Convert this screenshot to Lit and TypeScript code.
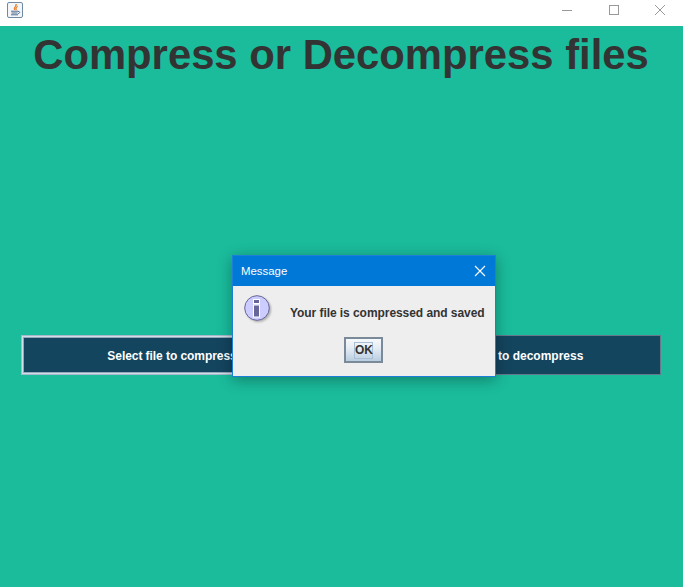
import { LitElement, html, css } from "lit";
import { customElement } from "lit/decorators.js";

@customElement("app-root")
export class AppRoot extends LitElement {
  static styles = css`
    :host { display: block; position: relative; width: 683px; height: 587px; overflow: hidden; background: #1abc9c; font-family: "Liberation Sans", Arial, sans-serif; }
    .titlebar { height: 26px; background: #fff; display: flex; align-items: flex-start; justify-content: space-between; }
    .appicon { margin: 2px 0 0 7px; width: 16px; height: 16px; display: block; }
    .winctl { display: flex; }
    .winctl svg { display: block; width: 46px; height: 20px; }
    .main { display: flex; flex-direction: column; }
    h1 { margin: 5px 0 0; height: 48px; text-align: center; font-size: 41.8px; line-height: 48px; font-weight: 700; color: #333333; padding-right: 1px; }
    .row { display: flex; justify-content: space-between; padding: 0 22px; margin-top: 256px; }
    .btn { box-sizing: border-box; height: 40px; background: #14455f; color: #fff; font-size: 12px; font-weight: 700; display: flex; align-items: center; justify-content: center; padding-top: 1px; }
    .b1 { width: 304px; margin-left: -1px; border: 1px solid #a3b8cc; box-shadow: inset 0 0 0 1px #d3dde7, inset 0 0 0 2px #93a8bc; letter-spacing: -0.06px; padding-right: 2px; }
    .b2 { width: 300px; border: 1px solid #65788e; }
    .dialog { position: absolute; left: 232px; top: 255px; width: 264px; height: 122px; box-sizing: border-box; background: #eeeeee; border: 1px solid #1e7fd8; box-shadow: 0 3px 14px rgba(0,0,0,.32); display: flex; flex-direction: column; }
    .dtitle { height: 30px; flex: none; background: #0078d7; color: #fff; font-size: 11.4px; display: flex; align-items: center; justify-content: space-between; padding: 0 9px 0 8px; }
    .dtitle svg { display: block; width: 12px; height: 12px; }
    .dbody { display: flex; align-items: flex-start; padding: 8px 0 0 10px; }
    .info { width: 30px; height: 30px; display: block; flex: none; }
    .msg { margin: 12px 0 0 17px; font-size: 12px; letter-spacing: -0.06px; font-weight: 700; line-height: 14px; color: #333; white-space: nowrap; }
    .actions { display: flex; justify-content: center; margin-top: 13px; padding-right: 1px; }
    .ok { box-sizing: border-box; width: 39px; height: 26px; border: 2px solid #7a8a99; background: linear-gradient(#f6f9fc, #e6edf4 40%, #b9cde0); display: flex; align-items: center; justify-content: center; padding: 0; font: 700 12px "Liberation Sans", Arial, sans-serif; color: #333; }
    .ok span { display: block; box-sizing: border-box; border: 1px solid #a8bfd6; width: 19px; height: 17px; line-height: 15px; text-align: center; }
  `;

  render() {
    return html`
      <div class="titlebar">
        <svg class="appicon" viewBox="0 0 16 16">
          <rect x=".5" y=".5" width="15" height="15" rx="1.5" fill="#f3f6f9" stroke="#6f8aa3"/>
          <path d="M9 2C10.6 4 6.6 5 7.8 8 6 6.2 9 4.6 9 2zM10.6 4.2C9.8 5.4 8.6 6 9.2 8 8.2 6.4 9 5 10.6 4.2z" fill="#e8791e" stroke="#e8791e" stroke-width=".8"/>
          <path d="M4 9.2h7M4.5 11h6M4 12.8h7M11 9.4c2.2-.4 2.2 2.2 0 2.2" fill="none" stroke="#4f6b8a" stroke-width="1"/>
        </svg>
        <div class="winctl">
          <svg viewBox="0 0 46 20"><path d="M17 10.5h10" stroke="#999" fill="none"/></svg>
          <svg viewBox="0 0 46 20"><rect x="18.5" y="5.5" width="9" height="9" stroke="#999" fill="none"/></svg>
          <svg viewBox="0 0 46 20"><path d="M18 5l10 10M28 5l-10 10" stroke="#999" fill="none"/></svg>
        </div>
      </div>
      <div class="main">
        <h1>Compress or Decompress files</h1>
        <div class="row">
          <div class="btn b1">Select file to compress</div>
          <div class="btn b2">Select file to decompress</div>
        </div>
      </div>
      <div class="dialog">
        <div class="dtitle">
          <span>Message</span>
          <svg viewBox="0 0 12 12"><path d="M1 1l10 10M11 1L1 11" stroke="#fff" stroke-width="1.1" fill="none"/></svg>
        </div>
        <div class="dbody">
          <svg class="info" viewBox="0 0 30 30">
            <defs>
              <filter id="s" x="-30%" y="-30%" width="170%" height="170%"><feGaussianBlur stdDeviation="1.2"/></filter>
            </defs>
            <circle cx="15.5" cy="15.5" r="12.5" fill="#777" opacity=".55" filter="url(#s)"/>
            <circle cx="14" cy="14" r="12.3" fill="#ccccff" stroke="#666699" stroke-width="1"/>
            <rect x="10" y="5" width="7" height="5" fill="#fff"/>
            <rect x="10" y="10.5" width="7" height="13" fill="#fff"/>
            <rect x="11" y="6" width="5" height="3" fill="#666699"/>
            <rect x="11" y="11.5" width="5" height="11" fill="#666699"/>
          </svg>
          <div class="msg">Your file is compressed and saved</div>
        </div>
        <div class="actions"><button class="ok"><span>OK</span></button></div>
      </div>
    `;
  }
}
